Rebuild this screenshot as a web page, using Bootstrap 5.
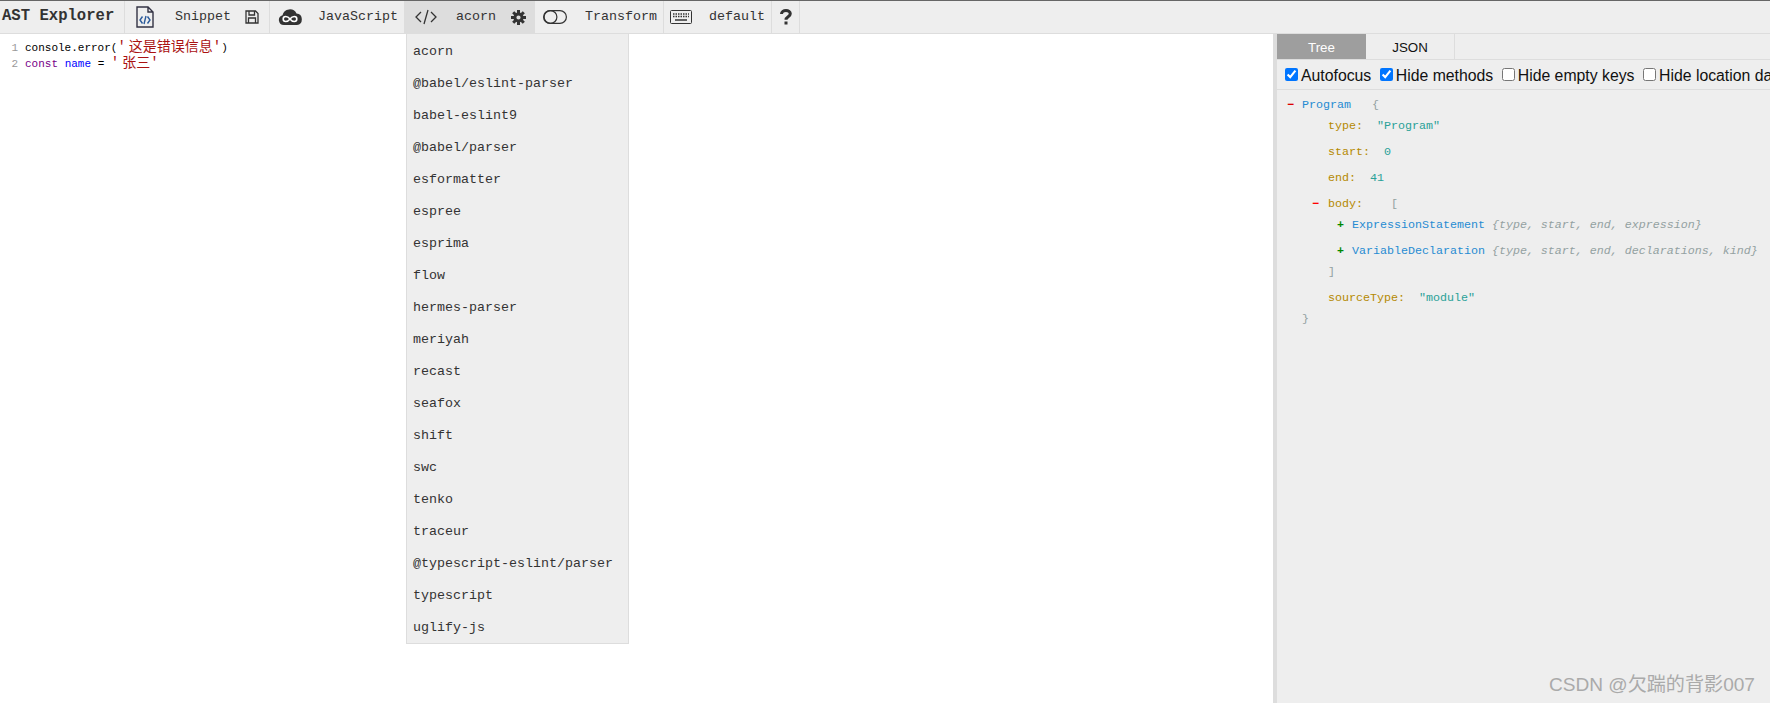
<!DOCTYPE html>
<html lang="en">
<head>
<meta charset="utf-8">
<title>AST Explorer</title>
<link href="https://cdn.jsdelivr.net/npm/bootstrap@5.3.0/dist/css/bootstrap.min.css" rel="stylesheet">
<style>
html,body{height:704px;overflow:hidden;background:#fff;margin:0}
body{font-family:"Liberation Sans",Arial,sans-serif;font-size:13.33px;color:#222;border-top:1px solid #666}
.mono{font-family:"Liberation Mono","Noto Sans CJK SC",monospace}
.tbar{height:33px;background:#eee;border-bottom:1px solid #ddd;font-size:13.33px;color:#333}
.tlogo{width:125px;padding-left:2px;font-size:15.6px;font-weight:700;border-right:1px solid #ddd}
.tgroup{height:32px;border-right:1px solid #ddd;color:#333}
.tgroup svg{display:block;flex:none}
.tsnip{width:145px}
.tlang{width:135px}
.tparser{width:130px;background:#ddd;border-right:0}
.ttrans{width:129px}
.tkeys{width:108px}
.thelp{width:28px}
.ico-file{margin-left:11px}
.txt-snip{margin-left:21px}
.ico-save{margin-left:14px}
.ico-cloud{margin-left:8px}
.txt-lang{margin-left:16px}
.ico-code{margin-left:10px}
.txt-parser{margin-left:19px}
.ico-gear{margin-left:15px}
.ico-toggle{margin-left:8px}
.txt-trans{margin-left:18px}
.ico-keys{margin-left:6px}
.txt-keys{margin-left:17px}
.work{height:669px}
.codepane{width:1273px;background:#fff;padding-top:5px}
.codeline{height:16px;line-height:16px;font-size:11px;white-space:pre;color:#000}
.gutter{display:inline-block;width:25px;padding-right:7px;text-align:right;color:#999}
.cjk{font-size:14px;color:#a11}
.qopen{margin-right:3px}
.kw{color:#708}.def{color:#00f}
.parsermenu{left:406px;top:0;width:223px;height:610px;background:#eee;border:1px solid #ddd;border-top:0;z-index:5}
.parsermenu div{height:32px;line-height:36px;padding-left:6px;font-size:13.33px;color:#333}
.splitter{width:4px;background:#ddd}
.sidepane{width:493px;background:#eee;overflow:hidden}
.tabrow{height:26px;border-bottom:1px solid #ddd}
.tabitem{width:89px;height:25px;line-height:27px;text-align:center;font-size:13.33px;color:#111}
.tabitem.on{background:#9e9e9e;color:#fff}
.tabitem.off{border-right:1px solid #ddd}
.optrow{height:30px;border-bottom:1px solid #ddd;padding-left:8px;font-size:15.8px;white-space:nowrap;color:#111;gap:8.500px}
.optrow label{display:flex;align-items:center;flex:none;line-height:30px;padding-top:3px}
.optrow input{width:13px;height:13px;margin:-3px 3px 0 0}
.treebox{padding:7px 0 0 10px;font-size:11.67px;line-height:16px;white-space:nowrap;color:#93a1a1}
.treebox ul{list-style:none;margin:5px 0;padding:0}
.treebox li+li{margin-top:10px}
.treebox ul.lvl1{padding-left:41px}
.treebox ul.lvl2{padding-left:9px}
.head-body{margin-left:-16px}
.tog{display:inline-block;width:15px;color:#d00;font-weight:700}
.tog.hot{color:#f00;width:16px}
.tog.plus{color:#080}
.nm{color:#268bd2}.ky{color:#b58900}.vl{color:#2aa198}.hint{font-style:italic;color:#93a1a1}
.close-root{padding-left:15px}
.mk{position:absolute;right:15px;bottom:4px;font-size:19.1px;color:#aaa;font-family:"Liberation Sans","Noto Sans CJK SC",sans-serif;z-index:9}
</style>
</head>
<body class="position-relative">
<div class="tbar d-flex mono">
  <div class="tlogo d-flex align-items-center">AST Explorer</div>
  <div class="tgroup tsnip d-flex align-items-center">
    <svg class="ico-file" width="18" height="22" viewBox="0 0 18 22" fill="none" stroke="#334" stroke-width="1.4"><path d="M1 1h11l5 5v15H1zM12 1v5h5"/><path d="M6.500 10.500l-2.500 3.500 2.500 3.500M11.500 10.500l2.500 3.500-2.500 3.500M10 10l-2 8" stroke="#2a5a9a"/></svg>
    <span class="txt-snip">Snippet</span>
    <svg class="ico-save" width="14" height="14" viewBox="0 0 14 14" fill="none" stroke="#333" stroke-width="1.3"><path d="M1 1h9.500L13 3.500V13H1zM4 1v4h5.500V1M3.500 13V8h7v5"/></svg>
  </div>
  <div class="tgroup tlang d-flex align-items-center">
    <svg class="ico-cloud" width="24" height="18" viewBox="0 0 24 18"><path d="M6 17a5 5 0 0 1-1.500-9.800 7.500 7.500 0 0 1 14-1.700 5.800 5.800 0 0 1 .5 11.500z" fill="#333"/><path d="M12 11c-1.500-2-3-2.500-4.300-2.500a2.500 2.500 0 0 0 0 5c1.300 0 2.800-.5 4.300-2.500 1.500-2 3-2.500 4.300-2.500a2.500 2.500 0 0 1 0 5c-1.300 0-2.800-.5-4.300-2.500z" fill="none" stroke="#fff" stroke-width="1.600"/></svg>
    <span class="txt-lang">JavaScript</span>
  </div>
  <div class="tgroup tparser d-flex align-items-center">
    <svg class="ico-code" width="22" height="16" viewBox="0 0 22 16" fill="none" stroke="#333" stroke-width="1.300"><path d="M6 3L1 8l5 5M16 3l5 5-5 5M13 1L9 15"/></svg>
    <span class="txt-parser">acorn</span>
    <svg class="ico-gear" width="15" height="15" viewBox="0 0 15 15"><circle cx="7.500" cy="7.500" r="3.600" fill="none" stroke="#333" stroke-width="3"/><path d="M7.500 0v3.500M7.500 11.500v3.500M0 7.500h3.500M11.500 7.500h3.500M2.200 2.200l2.500 2.500M10.300 10.300l2.500 2.500M12.800 2.200l-2.500 2.500M4.700 10.300l-2.500 2.500" stroke="#333" stroke-width="3"/></svg>
  </div>
  <div class="tgroup ttrans d-flex align-items-center">
    <svg class="ico-toggle" width="24" height="14" viewBox="0 0 24 14" fill="none" stroke="#333" stroke-width="1.200"><rect x=".6" y=".6" width="22.800" height="12.800" rx="6.400"/><circle cx="7.500" cy="7" r="6.400"/></svg>
    <span class="txt-trans">Transform</span>
  </div>
  <div class="tgroup tkeys d-flex align-items-center">
    <svg class="ico-keys" width="22" height="14" viewBox="0 0 22 14" fill="none" stroke="#333"><rect x=".5" y=".5" width="21" height="13" rx="1"/><path d="M3 4h16M3 6.500h16" stroke-width="1.500" stroke-dasharray="1.500 1"/><path d="M5 10h12" stroke-width="1.500"/></svg>
    <span class="txt-keys">default</span>
  </div>
  <div class="tgroup thelp d-flex align-items-center justify-content-center">
    <svg width="12" height="16" viewBox="0 0 12 16" fill="none" stroke="#333" stroke-width="3"><path d="M1.500 5C1.500 2.800 3.500 1.500 6 1.500s4.300 1.300 4.300 3.200c0 3-4.300 3-4.300 6"/><path d="M6 12.500v3"/></svg>
  </div>
</div>
<div class="work d-flex position-relative">
  <div class="codepane mono">
    <div class="codeline"><span class="gutter">1</span>console.error(<span class="cjk"><span class="qopen">'</span>这是错误信息'</span>)</div>
    <div class="codeline"><span class="gutter">2</span><span class="kw">const</span> <span class="def">name</span> = <span class="cjk"><span class="qopen">'</span>张三'</span></div>
  </div>
  <div class="parsermenu position-absolute mono">
    <div>acorn</div><div>@babel/eslint-parser</div><div>babel-eslint9</div><div>@babel/parser</div><div>esformatter</div><div>espree</div><div>esprima</div><div>flow</div><div>hermes-parser</div><div>meriyah</div><div>recast</div><div>seafox</div><div>shift</div><div>swc</div><div>tenko</div><div>traceur</div><div>@typescript-eslint/parser</div><div>typescript</div><div>uglify-js</div>
  </div>
  <div class="splitter"></div>
  <div class="sidepane">
    <div class="tabrow d-flex">
      <div class="tabitem on">Tree</div>
      <div class="tabitem off">JSON</div>
    </div>
    <div class="optrow d-flex align-items-center">
      <label><input type="checkbox" checked>Autofocus</label>
      <label><input type="checkbox" checked>Hide methods</label>
      <label><input type="checkbox">Hide empty keys</label>
      <label><input type="checkbox">Hide location data</label>
    </div>
    <div class="treebox mono">
      <div><span class="tog">−</span><span class="nm">Program</span>&nbsp;&nbsp;&nbsp;{</div>
      <ul class="lvl1">
        <li><span class="ky">type:</span>&nbsp;&nbsp;<span class="vl">"Program"</span></li>
        <li><span class="ky">start:</span>&nbsp;&nbsp;<span class="vl">0</span></li>
        <li><span class="ky">end:</span>&nbsp;&nbsp;<span class="vl">41</span></li>
        <li><div class="head-body"><span class="tog hot">−</span><span class="ky">body:</span>&nbsp;&nbsp;&nbsp;&nbsp;[</div>
          <ul class="lvl2">
            <li><span class="tog plus">+</span><span class="nm">ExpressionStatement</span>&nbsp;<span class="hint">{type, start, end, expression}</span></li>
            <li><span class="tog plus">+</span><span class="nm">VariableDeclaration</span>&nbsp;<span class="hint">{type, start, end, declarations, kind}</span></li>
          </ul>
          <div>]</div>
        </li>
        <li><span class="ky">sourceType:</span>&nbsp;&nbsp;<span class="vl">"module"</span></li>
      </ul>
      <div class="close-root">}</div>
    </div>
  </div>
</div>
<div class="mk">CSDN @欠踹的背影007</div>
<script src="https://cdn.jsdelivr.net/npm/bootstrap@5.3.0/dist/js/bootstrap.bundle.min.js"></script>
</body>
</html>
